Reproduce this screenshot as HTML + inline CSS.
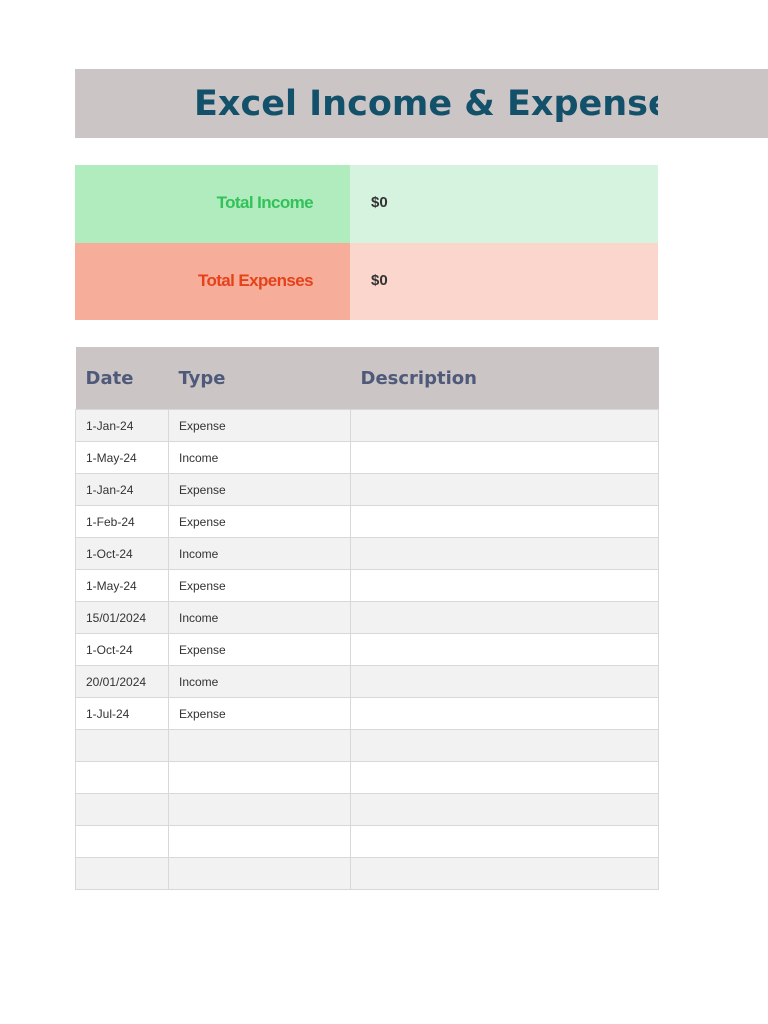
<!DOCTYPE html>
<html><head><style>
body{margin:0;width:768px;height:1024px;background:#fff;position:relative;overflow:hidden;font-family:"Liberation Sans",sans-serif}
.t{position:absolute;left:75px;top:69px;width:693px;height:69px;background:#cbc5c5}
.tc{position:absolute;left:75px;top:69px;width:583px;height:69px;overflow:hidden}
.tc span{position:absolute;left:119px;top:15px;font:bold 35px "DejaVu Sans",sans-serif;color:#13506a;white-space:nowrap}
.b{position:absolute;box-sizing:border-box}
.lab{font-weight:bold;font-size:17px;text-align:right;padding-right:37px;line-height:76px;letter-spacing:-0.6px}
.val{font-weight:bold;font-size:15px;padding-left:21px;line-height:76px;color:#333}
table{position:absolute;left:75px;top:347px;border-collapse:collapse;width:584px}
th{background:#cbc5c5;height:62px;text-align:left;font:bold 18px "DejaVu Sans",sans-serif;color:#4f5a7a;padding:0 0 0 10px}
td{height:31px;border:1px solid #d8d8d8;font-size:12px;color:#333;padding:0 0 0 10px}
tr:nth-child(even) td{background:#f2f2f2}
</style></head><body>
<div class="t"></div>
<div class="tc"><span>Excel Income &amp; Expenses</span></div>
<div class="b lab" style="left:75px;top:165px;width:275px;height:78px;background:#b0ecbd;color:#33c15a">Total Income</div>
<div class="b val" style="left:350px;top:165px;width:308px;height:78px;background:#d6f3df">$0</div>
<div class="b lab" style="left:75px;top:243px;width:275px;height:77px;background:#f6ae9b;color:#e5421a">Total Expenses</div>
<div class="b val" style="left:350px;top:243px;width:308px;height:77px;background:#fbd6cd">$0</div>
<table>
<tr><th style="width:83px">Date</th><th style="width:172px">Type</th><th>Description</th></tr>
<tr><td>1-Jan-24</td><td>Expense</td><td></td></tr>
<tr><td>1-May-24</td><td>Income</td><td></td></tr>
<tr><td>1-Jan-24</td><td>Expense</td><td></td></tr>
<tr><td>1-Feb-24</td><td>Expense</td><td></td></tr>
<tr><td>1-Oct-24</td><td>Income</td><td></td></tr>
<tr><td>1-May-24</td><td>Expense</td><td></td></tr>
<tr><td>15/01/2024</td><td>Income</td><td></td></tr>
<tr><td>1-Oct-24</td><td>Expense</td><td></td></tr>
<tr><td>20/01/2024</td><td>Income</td><td></td></tr>
<tr><td>1-Jul-24</td><td>Expense</td><td></td></tr>
<tr><td></td><td></td><td></td></tr>
<tr><td></td><td></td><td></td></tr>
<tr><td></td><td></td><td></td></tr>
<tr><td></td><td></td><td></td></tr>
<tr><td></td><td></td><td></td></tr>
</table>
</body></html>
